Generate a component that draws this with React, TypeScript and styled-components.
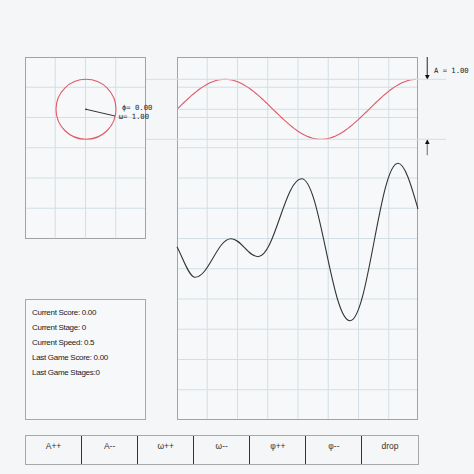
import React from 'react'
import styled, { createGlobalStyle } from 'styled-components'

const GRID = 30.25
const GRID_COLOR = '#d3dfe5'
const RED = '#e05a68'
const INK = '#333'
const LABEL = '#1e1e1e'

const GlobalStyle = createGlobalStyle`
  html, body {
    margin: 0;
    padding: 0;
    background: #f4f6f8;
    font-family: "Liberation Sans", Arial, sans-serif;
  }
  * { box-sizing: border-box; }
`

const Stage = styled.div`
  width: 474px;
  height: 474px;
  padding: 57px 0 0 25px;
  display: flex;
  flex-direction: column;
`

const TopArea = styled.div`
  position: relative;
  display: flex;
  align-items: flex-start;
  gap: 31px;
  height: 363px;
`

const LeftColumn = styled.div`
  width: 121px;
  height: 363px;
  display: flex;
  flex-direction: column;
  justify-content: space-between;
`

const Panel = styled.div<{ $w: number; $h: number }>`
  position: relative;
  z-index: 1;
  width: ${p => p.$w}px;
  height: ${p => p.$h}px;
  border: 1px solid #a3a3a3;
  background: #f6f8fa;
  svg {
    display: block;
    overflow: visible;
  }
`

const StatsBox = styled.div`
  width: 121px;
  height: 121px;
  border: 1px solid #a8a8a8;
  background: #f6f8fa;
  padding: 5px 6px;
  font-size: 8px;
  letter-spacing: -0.3px;
  color: #1a1a1a;
`

const StatLine = styled.div`
  line-height: 15px;
  white-space: nowrap;
`

const AmpColumn = styled.div`
  position: relative;
  z-index: 1;
  width: 56px;
  height: 120px;
  margin-left: -31px;
  svg {
    display: block;
    overflow: visible;
  }
`

const GuideOverlay = styled.svg`
  position: absolute;
  top: 0;
  left: 121px;
  right: 0;
  height: 100px;
  z-index: 2;
  pointer-events: none;
`

const ButtonBar = styled.div`
  margin-top: 15px;
  width: 393.5px;
  height: 30px;
  display: flex;
  border: 1px solid #a8a8a8;
`

const Button = styled.button`
  flex: 1;
  border: none;
  border-left: 1px solid #333;
  background: #f5f6f8;
  color: #333;
  font-family: "Liberation Sans", Arial, sans-serif;
  font-size: 8.5px;
  padding: 5px 0 0;
  line-height: 10px;
  display: flex;
  justify-content: center;
  align-items: flex-start;
  &:first-child {
    border-left: none;
  }
`

const Grid = ({ w, h }: { w: number; h: number }) => {
  const lines: React.ReactNode[] = []
  for (let x = GRID - 1; x < w - 2; x += GRID)
    lines.push(<line key={'v' + x} x1={x} y1={0} x2={x} y2={h} />)
  for (let y = GRID - 1; y < h - 2; y += GRID)
    lines.push(<line key={'h' + y} x1={0} y1={y} x2={w} y2={y} />)
  return (
    <g stroke={GRID_COLOR} strokeWidth={1}>
      {lines}
    </g>
  )
}

const sinePath = () => {
  const pts: string[] = []
  for (let x = 0; x <= 239; x += 2) {
    const y = 51.3 - 30 * Math.sin((2 * Math.PI * (x + 1)) / 192)
    pts.push(`${x === 0 ? 'M' : 'L'}${x.toFixed(1)} ${y.toFixed(2)}`)
  }
  return pts.join(' ')
}

// extrema of the signal wave, in panel coordinates
const signal: [number, number][] = [
  [17, 219.3],
  [53, 180.7],
  [80, 198.7],
  [123.7, 120.7],
  [172, 262.7],
  [220, 105.3],
]

const signalPath = () => {
  let d = `M-1 188.7 C5 200 11 219.3 17 219.3`
  for (let i = 1; i < signal.length; i++) {
    const [x0, y0] = signal[i - 1]
    const [x1, y1] = signal[i]
    const k = (x1 - x0) * 0.38
    d += ` C${x0 + k} ${y0} ${x1 - k} ${y1} ${x1} ${y1}`
  }
  d += ` C227.6 105.3 235 134 240 151`
  return d
}

const stats = [
  'Current Score: 0.00',
  'Current Stage: 0',
  'Current Speed: 0.5',
  'Last Game Score: 0.00',
  'Last Game Stages:0',
]

const buttons = ['A++', 'A--', 'ω++', 'ω--', 'φ++', 'φ--', 'drop']

const mono = '"DejaVu Sans Mono", "Liberation Mono", monospace'

export default function App() {
  return (
    <>
      <GlobalStyle />
      <Stage>
        <TopArea>
          <LeftColumn>
            <Panel $w={121} $h={181.5}>
              <svg width={119} height={179.5}>
                <Grid w={119} h={179.5} />
                <circle cx={60} cy={51.3} r={30} fill="none" stroke={RED} strokeWidth={1.1} />
                <line x1={60} y1={51.3} x2={89} y2={58} stroke={INK} strokeWidth={1} />
                <circle cx={60} cy={51.3} r={0.9} fill={INK} />
                <text x={96} y={52} fontFamily={mono} fontSize={7.2} fill={LABEL}>
                  ϕ= 0.00
                </text>
                <text x={92.7} y={61.4} fontFamily={mono} fontSize={7.2} fill={LABEL}>
                  ω= 1.00
                </text>
              </svg>
            </Panel>
            <StatsBox>
              {stats.map(s => (
                <StatLine key={s}>{s}</StatLine>
              ))}
            </StatsBox>
          </LeftColumn>
          <Panel $w={241} $h={363}>
            <svg width={239} height={361}>
              <Grid w={239} h={361} />
              <line x1={0} y1={51.3} x2={239} y2={51.3} stroke={GRID_COLOR} strokeWidth={1} />
              <path d={sinePath()} fill="none" stroke={RED} strokeWidth={1.1} />
              <path d={signalPath()} fill="none" stroke={INK} strokeWidth={1.1} />
            </svg>
          </Panel>
          <AmpColumn>
            <svg width={56} height={120}>
              <line x1={9.3} y1={0} x2={9.3} y2={18} stroke="#555" strokeWidth={1.3} />
              <polygon points="7,18 11.6,18 9.3,22.8" fill="#111" />
              <text x={16} y={16.2} fontFamily={mono} fontSize={7.2} fill={LABEL}>
                A = 1.00
              </text>
              <polygon points="7,87 11.6,87 9.3,82.2" fill="#111" />
              <line x1={9.3} y1={87} x2={9.3} y2={98.3} stroke="#888" strokeWidth={1.3} />
            </svg>
          </AmpColumn>
          <GuideOverlay>
            <g stroke={GRID_COLOR} strokeWidth={1}>
              <line x1={0} y1={22.3} x2={353} y2={22.3} />
              <line x1={0} y1={82.3} x2={353} y2={82.3} />
            </g>
          </GuideOverlay>
        </TopArea>
        <ButtonBar>
          {buttons.map(b => (
            <Button key={b}>{b}</Button>
          ))}
        </ButtonBar>
      </Stage>
    </>
  )
}
